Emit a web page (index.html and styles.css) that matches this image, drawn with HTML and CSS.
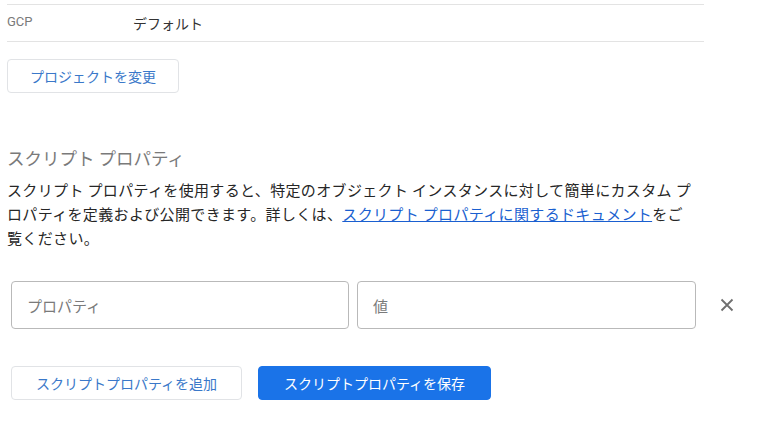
FILE: index.html
```html
<!DOCTYPE html>
<html lang="ja">
<head>
<meta charset="utf-8">
<link rel="stylesheet" href="styles.css">
</head>
<body>
<div class="page">
  <div class="info-row">
    <span class="info-label">GCP</span>
    <span class="info-value">デフォルト</span>
  </div>
  <div class="btn-row-top">
    <button class="btn btn-outline btn-change">プロジェクトを変更</button>
  </div>
  <h2 class="section-title">スクリプト プロパティ</h2>
  <p class="section-desc">スクリプト プロパティを使用すると、特定のオブジェクト インスタンスに対して簡単にカスタム プロパティを定義および公開できます。詳しくは、<a class="doc-link" href="#">スクリプト プロパティに関するドキュメント</a>をご覧ください。</p>
  <div class="prop-row">
    <div class="field field-key"><span class="placeholder">プロパティ</span></div>
    <div class="field field-value"><span class="placeholder">値</span></div>
    <span class="remove">
      <svg width="14" height="14" viewBox="0 0 14 14"><path d="M1.5 1.5 L12.5 12.5 M12.5 1.5 L1.5 12.5" stroke="#6f6f6f" stroke-width="1.8" fill="none"/></svg>
    </span>
  </div>
  <div class="actions">
    <button class="btn btn-outline btn-add">スクリプトプロパティを追加</button>
    <button class="btn btn-primary">スクリプトプロパティを保存</button>
  </div>
</div>
</body>
</html>
```
FILE: styles.css
```css
html, body {
  margin: 0;
  padding: 0;
  background: #ffffff;
}
body {
  font-family: "Noto Sans CJK JP", "Noto Sans", sans-serif;
  color: #262626;
}
.page {
  width: 697px;
  padding-left: 7px;
  padding-top: 4px;
  display: flex;
  flex-direction: column;
}
.info-row {
  display: grid;
  grid-template-columns: 126px 1fr;
  align-items: center;
  height: 36px;
  border-top: 1px solid #e3e3e3;
  border-bottom: 1px solid #e3e3e3;
}
.info-label {
  font-family: "Roboto", "Noto Sans", sans-serif;
  font-size: 13px;
  color: #7a7a7a;
  margin-top: -3px;
}
.info-value {
  font-size: 14px;
  color: #333333;
}
.btn-row-top {
  margin-top: 17px;
  display: flex;
}
.btn {
  height: 34px;
  padding: 0 22px;
  border-radius: 4px;
  font-family: "Noto Sans CJK JP", sans-serif;
  font-size: 14px;
  line-height: 32px;
  cursor: pointer;
  flex-shrink: 0;
}
.btn-change {
  width: 172px;
}
.btn-outline {
  background: #ffffff;
  border: 1px solid #e1e3e6;
  color: #3a78c9;
}
.btn-primary {
  background: #1a73e8;
  border: 1px solid #1a73e8;
  color: #ffffff;
}
.section-title {
  margin: 53px 0 0 0;
  font-size: 17.5px;
  font-weight: 400;
  line-height: 24px;
  color: #7a7a7a;
}
.section-desc {
  margin: 8px 0 0 0;
  width: 689px;
  font-size: 15px;
  line-height: 24px;
  letter-spacing: 0.35px;
  color: #262626;
}
.doc-link {
  color: #1a5fd0;
  text-decoration: underline;
}
.prop-row {
  margin-top: 31px;
  margin-left: 4px;
  display: flex;
  align-items: center;
  gap: 8px;
}
.field {
  flex-shrink: 0;
  height: 48px;
  box-sizing: border-box;
  border: 1px solid #b9b9b9;
  border-radius: 4px;
  display: flex;
  align-items: center;
  padding-left: 15px;
}
.field-key {
  width: 338px;
}
.field-value {
  width: 339px;
}
.placeholder {
  font-size: 15px;
  color: #7a7a7a;
}
.remove {
  flex-shrink: 0;
  margin-left: 16px;
  display: flex;
  align-items: center;
}
.actions {
  margin-top: 37px;
  margin-left: 4px;
  display: flex;
  gap: 16px;
}
.btn-add {
  width: 231px;
}
.actions .btn-primary {
  width: 233px;
}
```
